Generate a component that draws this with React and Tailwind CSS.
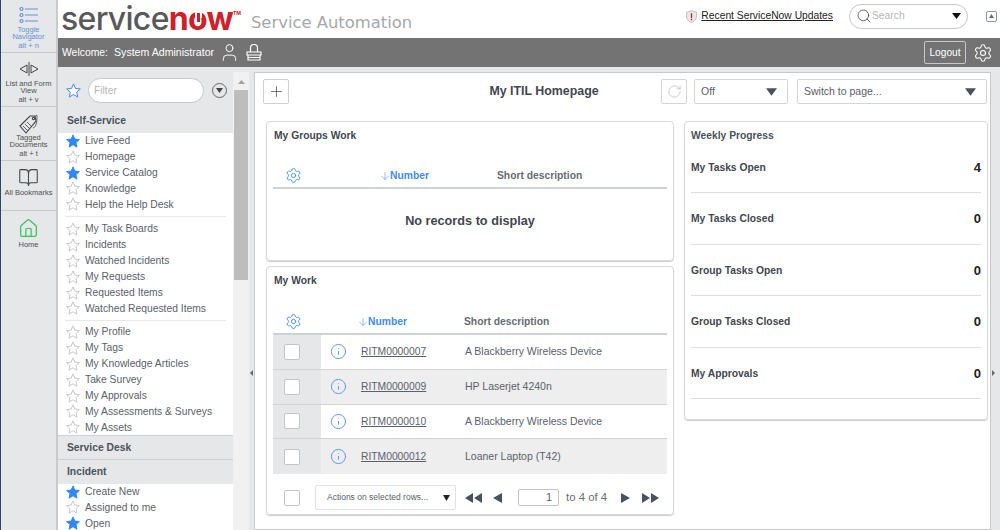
import React from "react";
import { Search, Settings, User, RotateCw, Plus, Info, ArrowDown, Home, BookOpen } from "lucide-react";

const FONT = "font-['Liberation_Sans',Arial,sans-serif]";

const SELF_SERVICE = [
  [["Live Feed", 1], ["Homepage", 0], ["Service Catalog", 1], ["Knowledge", 0], ["Help the Help Desk", 0]],
  [["My Task Boards", 0], ["Incidents", 0], ["Watched Incidents", 0], ["My Requests", 0], ["Requested Items", 0], ["Watched Requested Items", 0]],
  [["My Profile", 0], ["My Tags", 0], ["My Knowledge Articles", 0], ["Take Survey", 0], ["My Approvals", 0], ["My Assessments & Surveys", 0], ["My Assets", 0]],
];
const INCIDENT = [["Create New", 1], ["Assigned to me", 0], ["Open", 1]];

const ROWS = [
  ["RITM0000007", "A Blackberry Wireless Device"],
  ["RITM0000009", "HP Laserjet 4240n"],
  ["RITM0000010", "A Blackberry Wireless Device"],
  ["RITM0000012", "Loaner Laptop (T42)"],
];

const PROGRESS = [
  ["My Tasks Open", 4],
  ["My Tasks Closed", 0],
  ["Group Tasks Open", 0],
  ["Group Tasks Closed", 0],
  ["My Approvals", 0],
];

function Star({ on, outline = "#c4c4c8", size = 14 }) {
  return (
    <svg width={size} height={size} viewBox="0 0 24 24" className="shrink-0">
      <path
        d="M12 1.5l3.2 7.2 7.8.8-5.9 5.2 1.7 7.8L12 18.4l-6.8 4.1 1.7-7.8L1 9.5l7.8-.8z"
        fill={on ? "#2f86f5" : "#fff"}
        stroke={on ? "#2f86f5" : outline}
        strokeWidth="1.6"
      />
    </svg>
  );
}

function Triangle({ className }) {
  return (
    <svg width="12" height="8" viewBox="0 0 12 8" className={className}>
      <path d="M0 0h12L6 8z" fill="currentColor" />
    </svg>
  );
}

function RailItem({ box, icon, label, labelTop, hint, blue }) {
  return (
    <div className={`${box} flex shrink-0 flex-col items-center border-b border-[#c8c9cb] text-center text-[7.5px] leading-[7px] ${blue ? "text-[#5f93d6]" : "text-[#4f4f4f]"}`}>
      {icon}
      <div className={`${labelTop} w-[56px] whitespace-nowrap`}>{label}</div>
      {hint && <div className="mt-[2px]">{hint}</div>}
    </div>
  );
}

function NavItem({ label, on }) {
  return (
    <div className="flex h-[15.85px] items-center gap-[5px] pl-[8px] text-[10.3px] whitespace-nowrap text-[#5a616b]">
      <Star on={on} />
      <span>{label}</span>
    </div>
  );
}

function NavHeader({ children, className = "" }) {
  return (
    <div className={`flex shrink-0 items-center bg-[#e6e7e8] pl-[9px] text-[10.3px] font-bold text-[#4a525c] ${className}`}>
      {children}
    </div>
  );
}

function Select({ label, className }) {
  return (
    <div className={`flex h-[25px] items-center justify-between rounded-[2px] border border-[#d5d5d5] bg-white pl-[6px] pr-[10px] text-[10.5px] text-[#5a616b] ${className}`}>
      <span>{label}</span>
      <Triangle className="w-[11px] text-[#46525f]" />
    </div>
  );
}

function SortHead({ gearW, numW }) {
  return (
    <div className="flex h-[28px] items-center border-b-2 border-[#cfd2d5] pt-[3px] text-[10.3px] font-bold">
      <div className={`${gearW} pl-[12px]`}>
        <Settings size={17} strokeWidth={1.3} className="text-[#3f8cf3]" />
      </div>
      <div className={`${numW} flex items-center text-[#3f8cf3]`}>
        <ArrowDown size={12} strokeWidth={1.1} className="-mr-[1px] -ml-[1px]" />
        <span>Number</span>
      </div>
      <div className="text-[#666c74]">Short description</div>
    </div>
  );
}

function Pager() {
  return (
    <div className="flex items-center text-[#46525f]">
      <div className="ml-[17px] h-[16px] w-[16px] rounded-[2px] border border-[#c4c4c4] bg-white" />
      <div className="ml-[15px] flex h-[25px] w-[141px] items-center justify-between rounded-[2px] border border-[#e2e2e2] bg-white pl-[11px] pr-[5px] text-[8.5px] whitespace-nowrap text-[#5a616b]">
        <span>Actions on selected rows...</span>
        <svg width="7" height="6" viewBox="0 0 7 6"><path d="M0 0h7L3.500 6z" fill="#222" /></svg>
      </div>
      <svg width="17" height="10" viewBox="0 0 17 10" className="ml-[9px]"><path d="M8 0v10L0 5zM17 0v10L9 5z" fill="currentColor" /></svg>
      <svg width="9" height="10" viewBox="0 0 9 10" className="ml-[11px]"><path d="M9 0v10L0 5z" fill="currentColor" /></svg>
      <div className="ml-[16px] flex h-[17px] w-[41px] items-center justify-end rounded-[2px] border border-[#c4c4c4] bg-white pr-[6px] text-[11px] text-[#5a616b]">1</div>
      <span className="ml-[7px] text-[11.4px] whitespace-nowrap text-[#6a6f76]">to 4 of 4</span>
      <svg width="9" height="10" viewBox="0 0 9 10" className="ml-[14px]"><path d="M0 0v10l9-5z" fill="currentColor" /></svg>
      <svg width="17" height="10" viewBox="0 0 17 10" className="ml-[12px]"><path d="M0 0v10l8-5zM9 0v10l8-5z" fill="currentColor" /></svg>
    </div>
  );
}

function Splitter({ points }) {
  return (
    <div className="flex w-[5px] shrink-0 justify-center pt-[298px]">
      <svg width="3" height="6" viewBox="0 0 3 6"><path d={points} fill="#666" /></svg>
    </div>
  );
}

export default function App() {
  return (
    <div className={`${FONT} flex h-[530px] w-[1000px] overflow-hidden bg-white`}>
      {/* left rail */}
      <div className="flex h-full w-[58px] shrink-0 flex-col border-l border-r-[2px] border-l-[#2c4a66] border-r-[#c9cacc] bg-[#e6e7e8]">
        <RailItem
          blue
          box="h-[53px] pt-[6px]"
          labelTop="mt-[2px]"
          label={<>Toggle<br />Navigator</>}
          hint="alt + n"
          icon={
            <svg width="20" height="18" viewBox="0 0 20 18" fill="none" stroke="#5f93d6" strokeWidth="1.2">
              <circle cx="2.5" cy="3" r="1.5" /><circle cx="2.5" cy="9" r="1.5" /><circle cx="2.5" cy="15" r="1.5" />
              <path d="M6 3h13M6 9h13M6 15h13" />
            </svg>
          }
        />
        <RailItem
          box="h-[54px] pt-[8px]"
          labelTop="mt-[3px]"
          label={<>List and Form<br />View</>}
          hint="alt + v"
          icon={
            <svg width="20" height="16" viewBox="0 0 20 16" fill="none" stroke="#444" strokeWidth="1">
              <path d="M8 4v8L1 8zM12 4v8l7-4zM10 1v14" />
            </svg>
          }
        />
        <RailItem
          box="h-[54px] pt-[6px]"
          labelTop="-mt-[1px]"
          label={<>Tagged<br />Documents</>}
          hint="alt + t"
          icon={
            <svg width="20" height="22" viewBox="0 0 20 22" fill="none" stroke="#444" strokeWidth="1.1">
              <path d="M1 13L11 3h5l1 5L7 20z" />
              <path d="M4 13l5 5M6 11l5 5M8 9l5 5" strokeWidth=".8" />
              <circle cx="14.500" cy="5.500" r="1.200" />
              <path d="M15 5c1-2 3-4 3-2 0 3 0 11-4 12" strokeWidth=".8" />
            </svg>
          }
        />
        <RailItem
          box="h-[50px] pt-[6px]"
          labelTop="mt-[1px]"
          label="All Bookmarks"
          icon={<BookOpen size={21} strokeWidth={1.2} className="text-[#444]" />}
        />
        <div className="flex flex-col items-center pt-[7px] text-[7.5px] leading-[7px] text-[#4f4f4f]">
          <Home size={21} strokeWidth={1.4} className="text-[#36c45f]" />
          <div className="mt-[2px]">Home</div>
        </div>
      </div>

      <div className="flex min-w-0 flex-1 flex-col bg-[#e6e7e8]">
        {/* logo row */}
        <div className="flex h-[38px] shrink-0 items-start bg-white pl-[3px]">
          <div className="flex items-start font-['Inter',sans-serif] text-[32px] leading-[38px] font-medium tracking-[-0.7px]">
            <span className="text-[#58595b]">service</span>
            <span className="relative font-bold text-[#d0212a]">
              now
              {/* power symbol notch in the o */}
              <span className="absolute top-[12px] left-[26px] h-[6px] w-[7px] bg-white" />
              <span className="absolute top-[13px] left-[28px] h-[9px] w-[3px] bg-[#d0212a]" />
            </span>
            <span className="mt-[10px] text-[5px] leading-[6px] font-bold tracking-normal text-[#d0212a]">TM</span>
          </div>
          <span className="mt-[13px] ml-[10px] font-['DejaVu_Sans',sans-serif] text-[16.4px] leading-[20px] whitespace-nowrap text-[#a6a8ab]">Service Automation</span>
          <div className="ml-auto flex h-[32px] items-center">
            <svg width="11" height="13" viewBox="0 0 12 14">
              <path d="M6 .5l5.500 2v4c0 3.500-2.500 6-5.500 7-3-1-5.500-3.500-5.500-7v-4z" fill="#e8e8e8" stroke="#bbb" />
              <path d="M6 3.500v5M6 9.500v1.500" stroke="#c8202a" strokeWidth="1.400" />
            </svg>
            <a className="ml-[4px] text-[10.3px] whitespace-nowrap text-[#222] underline">Recent ServiceNow Updates</a>
            <div className="ml-[16px] flex h-[25px] w-[119px] items-center rounded-full border border-[#c8c8c8] bg-white pl-[6px]">
              <Search size={16} strokeWidth={1.2} className="text-[#444]" />
              <span className="text-[10.3px] text-[#b5b5b5]">Search</span>
              <Triangle className="mr-[6px] ml-auto w-[9px] text-[#111]" />
            </div>
            <div className="mr-[3px] ml-[18px] flex h-[11px] w-[11px] items-center justify-center rounded-[2px] border border-[#8a97a6]">
              <svg width="5" height="4" viewBox="0 0 5 4"><path d="M0 4h5L2.500 0z" fill="#5a6a7c" /></svg>
            </div>
          </div>
        </div>

        {/* welcome bar */}
        <div className="flex h-[29px] shrink-0 items-center bg-[#737373] pl-[4px] text-[10.4px] whitespace-nowrap text-white">
          <span>Welcome:</span>
          <span className="ml-[6px] text-[10.6px]">System Administrator</span>
          <User size={21} strokeWidth={1.1} className="ml-[5px]" />
          <svg width="16" height="17" viewBox="0 0 16 17" fill="none" stroke="#fff" strokeWidth="1.200" className="ml-[6px]">
            <path d="M4.500 8V4a3.500 3.500 0 017 0v4M1 8h14v3H1zM2 11v5h12v-5M2 13.500h12" />
          </svg>
          <div className="ml-auto flex h-[23px] w-[42px] items-center justify-center rounded-[2px] border border-[#c8c8c8] text-[10.2px]">Logout</div>
          <Settings size={20} strokeWidth={1.3} className="mx-[7px]" />
        </div>

        <div className="flex min-h-0 flex-1 pt-[5px]">
          {/* nav */}
          <div className="flex h-full w-[175px] shrink-0 flex-col overflow-hidden bg-white">
            <div className="flex h-[37px] shrink-0 items-center bg-[#e6e7e8] pl-[8px]">
              <Star size={15} on={false} outline="#4a86e8" />
              <div className="ml-[7px] flex h-[25px] w-[116px] items-center rounded-full border border-[#c8c8c8] bg-white pl-[5px] text-[10.3px] text-[#b5b5b5]">Filter</div>
              <div className="ml-[8px] flex h-[15px] w-[15px] items-center justify-center rounded-full border border-[#666]">
                <svg width="7" height="5" viewBox="0 0 7 5"><path d="M0 0h7L3.500 5z" fill="#444" /></svg>
              </div>
            </div>
            <NavHeader className="h-[24px]">Self-Service</NavHeader>
            <div className="shrink-0">
              {SELF_SERVICE.map((group, i) => (
                <div key={i} className={i === 0 ? "mb-[4px]" : i === 1 ? "mb-[3px]" : ""}>
                  <div className={i < 2 ? "pb-[4px]" : ""}>
                    {group.map(([label, on]) => <NavItem key={label} label={label} on={on} />)}
                  </div>
                  {i < 2 && <div className="mx-[7px] border-b border-[#e9e9e9]" />}
                </div>
              ))}
            </div>
            <NavHeader className="h-[24px] border-t border-[#cfd0d2]">Service Desk</NavHeader>
            <NavHeader className="h-[24.5px] border-t border-[#cfd0d2]">Incident</NavHeader>
            <div>
              {INCIDENT.map(([label, on]) => <NavItem key={label} label={label} on={on} />)}
            </div>
          </div>

          {/* scrollbar */}
          <div className="flex h-full w-[16px] shrink-0 flex-col items-center bg-[#f1f1f1]">
            <svg width="7" height="4" viewBox="0 0 7 4" className="mt-[8px]"><path d="M0 4h7L3.500 0z" fill="#a0a0a0" /></svg>
            <div className="mt-[6px] h-[190px] w-[14px] bg-[#bdbdbd]" />
          </div>
          <Splitter points="M3 0v6L0 3z" />

          {/* main panel */}
          <div className="flex h-full w-[737px] shrink-0 flex-col border border-[#c8c9cb] bg-white pt-[6px] pl-[8px]">
            <div className="flex h-[25px] shrink-0 items-center">
              <div className="flex h-[25px] w-[26px] items-center justify-center rounded-[2px] border border-[#cfcfcf]">
                <Plus size={17} strokeWidth={1} className="text-[#444]" />
              </div>
              <div className="w-[372px] pl-[138px] text-center text-[12.4px] font-bold whitespace-nowrap text-[#3f4750]">My ITIL Homepage</div>
              <div className="flex h-[25px] w-[26px] items-center justify-center rounded-[2px] border border-[#d5d5d5]">
                <RotateCw size={15} strokeWidth={1.2} className="text-[#bbb]" />
              </div>
              <Select label="Off" className="ml-[7px] w-[94px]" />
              <Select label="Switch to page..." className="ml-[9px] w-[190px]" />
            </div>

            <div className="mt-[17px] ml-[3px] flex gap-[10px]">
              <div className="flex w-[408px] shrink-0 flex-col gap-[5px]">
                <div className="h-[140px] rounded-[4px] border border-[#d8d8d8] pt-[7px] shadow-[0_1px_1px_#ccc]">
                  <div className="pl-[7px] text-[10.3px] leading-[14px] font-bold text-[#3f4750]">My Groups Work</div>
                  <div className="mx-[6px] mt-[18px]"><SortHead gearW="w-[107px]" numW="w-[117px]" /></div>
                  <div className="mt-[25px] text-center text-[12.7px] leading-[14px] font-bold text-[#3f4750]">No records to display</div>
                </div>

                <div className="h-[249px] rounded-[4px] border border-[#d8d8d8] pt-[7px] shadow-[0_1px_1px_#ccc]">
                  <div className="pl-[7px] text-[10.3px] leading-[14px] font-bold text-[#3f4750]">My Work</div>
                  <div className="mx-[6px] mt-[19px]"><SortHead gearW="w-[85px]" numW="w-[106px]" /></div>
                  <div className="mx-[6px]">
                    {ROWS.map(([num, desc], i) => (
                      <div key={num} className={`flex h-[34.75px] items-center border-b border-[#d0d2d4] last:border-b-0 ${i % 2 ? "bg-[#eeeeee]" : "bg-white"}`}>
                        <div className="flex h-full w-[48px] items-center bg-[#e6e7e8] pl-[11px]">
                          <div className="h-[16px] w-[16px] rounded-[2px] border border-[#c4c4c4] bg-white" />
                        </div>
                        <Info size={17} strokeWidth={1.3} className="ml-[9px] text-[#4f93f5]" />
                        <a className="ml-[14px] w-[104px] text-[10.3px] text-[#5a616b] underline">{num}</a>
                        <span className="text-[10.5px] text-[#5a616b]">{desc}</span>
                      </div>
                    ))}
                  </div>
                  <div className="mt-[11px]"><Pager /></div>
                </div>
              </div>

              <div className="h-[299px] w-[304px] shrink-0 rounded-[4px] border border-[#d8d8d8] pt-[7px] shadow-[0_1px_1px_#ccc]">
                <div className="pl-[6px] text-[10.3px] leading-[14px] font-bold text-[#4a525c]">Weekly Progress</div>
                <div className="-mt-[1px] mx-[6px]">
                  {PROGRESS.map(([label, n]) => (
                    <div key={label} className="flex h-[51.4px] items-start justify-between border-b border-[#dcdcdc] pt-[18px]">
                      <span className="text-[10.3px] font-bold text-[#3f4750]">{label}</span>
                      <span className="text-[13px] leading-[15px] font-bold text-[#222]">{n}</span>
                    </div>
                  ))}
                </div>
              </div>
            </div>
          </div>
          <Splitter points="M0 0v6l3-3z" />
        </div>
      </div>
    </div>
  );
}
